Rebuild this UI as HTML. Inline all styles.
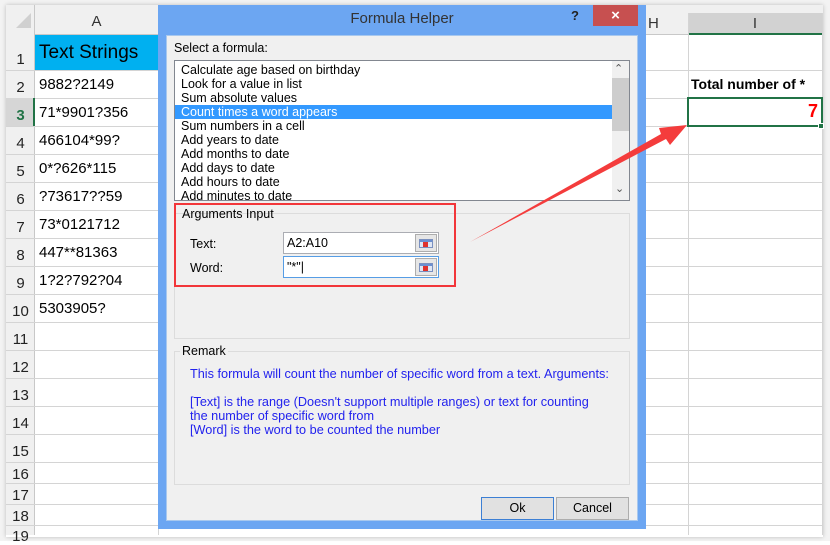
<!DOCTYPE html>
<html><head><meta charset="utf-8"><style>
*{margin:0;padding:0;box-sizing:border-box}
body{width:830px;height:541px;background:#fff;position:relative;overflow:hidden;font-family:"Liberation Sans",sans-serif}
.a{position:absolute}
.hl{position:absolute;height:1px;background:#d4d4d4}
.vl{position:absolute;width:1px;background:#d4d4d4}
.rh{position:absolute;left:6px;width:29px;font-size:15px;color:#222;text-align:center}
.cell{position:absolute;left:39px;font-size:15px;color:#000}
.li{height:14px;line-height:14px;font-size:12.5px;padding-left:6px;color:#000;white-space:nowrap}
</style></head><body>
<div class="a" style="left:0;top:0;width:830px;height:541px;background:#f3f3f3"></div>
<div class="a" style="left:6px;top:5px;width:817px;height:532px;background:#fff;box-shadow:0 0 4px #bbb"></div>
<div class="a" style="left:6px;top:5px;width:817px;height:30px;background:#f0f0f0;border-bottom:1px solid #c8c8c8"></div>
<div class="a" style="left:6px;top:5px;width:29px;height:530px;background:#f0f0f0;border-right:1px solid #c8c8c8"></div>
<div class="a" style="left:16px;top:13px;width:0;height:0;border-left:15px solid transparent;border-bottom:15px solid #d0d0d0"></div>
<div class="a" style="left:35px;top:13px;width:123px;text-align:center;font-size:15px;color:#333">A</div>
<div class="a" style="left:648px;top:15px;font-size:15px;color:#333">H</div>
<div class="a" style="left:688px;top:13px;width:134px;height:22px;background:#d2d2d2;border-bottom:2px solid #217346;text-align:center;font-size:15px;color:#333;line-height:22px">I</div>
<div class="vl" style="left:688px;top:13px;height:522px"></div>
<div class="vl" style="left:822px;top:13px;height:522px"></div>
<div class="vl" style="left:158px;top:13px;height:522px"></div>
<div class="hl" style="left:6px;top:70px;width:817px"></div>
<div class="hl" style="left:6px;top:98px;width:817px"></div>
<div class="hl" style="left:6px;top:126px;width:817px"></div>
<div class="hl" style="left:6px;top:154px;width:817px"></div>
<div class="hl" style="left:6px;top:182px;width:817px"></div>
<div class="hl" style="left:6px;top:210px;width:817px"></div>
<div class="hl" style="left:6px;top:238px;width:817px"></div>
<div class="hl" style="left:6px;top:266px;width:817px"></div>
<div class="hl" style="left:6px;top:294px;width:817px"></div>
<div class="hl" style="left:6px;top:322px;width:817px"></div>
<div class="hl" style="left:6px;top:350px;width:817px"></div>
<div class="hl" style="left:6px;top:378px;width:817px"></div>
<div class="hl" style="left:6px;top:406px;width:817px"></div>
<div class="hl" style="left:6px;top:434px;width:817px"></div>
<div class="hl" style="left:6px;top:462px;width:817px"></div>
<div class="hl" style="left:6px;top:483px;width:817px"></div>
<div class="hl" style="left:6px;top:504px;width:817px"></div>
<div class="hl" style="left:6px;top:525px;width:817px"></div>
<div class="a" style="left:6px;top:98px;width:29px;height:28px;background:#d6d6d6;border-right:2px solid #217346"></div>
<div class="rh" style="top:51px">1</div><div class="rh" style="top:79px">2</div><div class="rh" style="top:107px;color:#217346;font-weight:bold">3</div>
<div class="rh" style="top:135px">4</div><div class="rh" style="top:163px">5</div><div class="rh" style="top:191px">6</div>
<div class="rh" style="top:219px">7</div><div class="rh" style="top:247px">8</div><div class="rh" style="top:275px">9</div>
<div class="rh" style="top:303px">10</div><div class="rh" style="top:331px">11</div><div class="rh" style="top:359px">12</div>
<div class="rh" style="top:387px">13</div><div class="rh" style="top:415px">14</div><div class="rh" style="top:443px">15</div>
<div class="rh" style="top:466px">16</div><div class="rh" style="top:487px">17</div><div class="rh" style="top:508px">18</div><div class="rh" style="top:528px">19</div>
<div class="a" style="left:35px;top:35px;width:123px;height:35px;background:#00b0f0"></div>
<div class="cell" style="top:42px;font-size:19px">Text Strings</div>
<div class="cell" style="top:76px">9882?2149</div>
<div class="cell" style="top:104px">71*9901?356</div>
<div class="cell" style="top:132px">466104*99?</div>
<div class="cell" style="top:160px">0*?626*115</div>
<div class="cell" style="top:188px">?73617??59</div>
<div class="cell" style="top:216px">73*0121712</div>
<div class="cell" style="top:244px">447**81363</div>
<div class="cell" style="top:272px">1?2?792?04</div>
<div class="cell" style="top:300px">5303905?</div>
<div class="a" style="left:691px;top:76px;font-size:14px;font-weight:bold;white-space:nowrap">Total number of *</div>
<div class="a" style="left:687px;top:97px;width:136px;height:30px;border:2px solid #217346"></div>
<div class="a" style="left:818px;top:123px;width:6px;height:6px;background:#217346;border:1px solid #fff"></div>
<div class="a" style="left:790px;top:101px;width:28px;text-align:right;font-size:18px;font-weight:bold;color:#f00">7</div>
<div class="a" style="left:158px;top:5px;width:488px;height:524px;background:#6ca6f2"></div>
<div class="a" style="left:158px;top:10px;width:488px;text-align:center;font-size:15px;color:#333">Formula Helper</div>
<div class="a" style="left:571px;top:8px;font-size:13px;font-weight:bold;color:#222">?</div>
<div class="a" style="left:593px;top:5px;width:45px;height:21px;background:#c75050;color:#fff;text-align:center;font-size:15px;font-weight:bold;line-height:21px">×</div>
<div class="a" style="left:166px;top:35px;width:472px;height:486px;background:#f0f0f0;border:1px solid #a8c8ee"></div>
<div class="a" style="left:174px;top:41px;font-size:12.5px">Select a formula:</div>
<div class="a" style="left:174px;top:60px;width:456px;height:141px;background:#fff;border:1px solid #828790;overflow:hidden;padding-top:2px">
<div class="li">Calculate age based on birthday</div>
<div class="li">Look for a value in list</div>
<div class="li">Sum absolute values</div>
<div class="li" style="background:#3399ff;color:#fff;width:437px">Count times a word appears</div>
<div class="li">Sum numbers in a cell</div>
<div class="li">Add years to date</div>
<div class="li">Add months to date</div>
<div class="li">Add days to date</div>
<div class="li">Add hours to date</div>
<div class="li">Add minutes to date</div>
</div>
<div class="a" style="left:612px;top:61px;width:17px;height:139px;background:#f0f0f0"></div>
<div class="a" style="left:612px;top:78px;width:17px;height:53px;background:#cdcdcd"></div>
<div class="a" style="left:614px;top:62px;font-size:11px;color:#555">&#8963;</div>
<div class="a" style="left:615px;top:182px;font-size:11px;color:#555">&#8964;</div>
<div class="a" style="left:174px;top:213px;width:456px;height:126px;border:1px solid #dcdcdc"></div>
<div class="a" style="left:174px;top:203px;width:282px;height:84px;border:2px solid #f2363a"></div>
<div class="a" style="left:182px;top:207px;font-size:12.5px">Arguments Input</div>
<div class="a" style="left:190px;top:237px;font-size:12.5px">Text:</div>
<div class="a" style="left:190px;top:261px;font-size:12.5px">Word:</div>
<div class="a" style="left:283px;top:232px;width:156px;height:22px;background:#fff;border:1px solid #abadb3;font-size:12.5px;padding:3px 3px">A2:A10</div>
<div class="a" style="left:283px;top:256px;width:156px;height:22px;background:#fff;border:1px solid #569de5;font-size:12.5px;padding:3px 3px">"*"|</div>
<div class="a" style="left:415px;top:234px;width:22px;height:18px;background:#e6e6e6;border:1px solid #adadad"><div style="margin:4px 3px;width:14px;height:9px;background:linear-gradient(#6a8fd0 0 30%,#dfe6f3 30%);border:1px solid #7a90c0"><div style="margin:2px 3px;width:5px;height:5px;background:#e0312c"></div></div></div>
<div class="a" style="left:415px;top:258px;width:22px;height:18px;background:#e6e6e6;border:1px solid #adadad"><div style="margin:4px 3px;width:14px;height:9px;background:linear-gradient(#6a8fd0 0 30%,#dfe6f3 30%);border:1px solid #7a90c0"><div style="margin:2px 3px;width:5px;height:5px;background:#e0312c"></div></div></div>
<div class="a" style="left:174px;top:351px;width:456px;height:134px;border:1px solid #dcdcdc"></div>
<div class="a" style="left:180px;top:344px;font-size:12.5px;background:#f0f0f0;padding:0 2px">Remark</div>
<div class="a" style="left:190px;top:367px;font-size:12.7px;color:#2222ee;line-height:14px;width:440px;white-space:nowrap">This formula will count the number of specific word from a text. Arguments:<br><br>[Text] is the range (Doesn't support multiple ranges) or text for counting<br>the number of specific word from<br>[Word] is the word to be counted the number</div>
<div class="a" style="left:481px;top:497px;width:73px;height:23px;background:#e1e1e1;border:1px solid #3c7fd4;text-align:center;font-size:12.5px;line-height:21px">Ok</div>
<div class="a" style="left:556px;top:497px;width:73px;height:23px;background:#e1e1e1;border:1px solid #adadad;text-align:center;font-size:12.5px;line-height:21px">Cancel</div>
<svg class="a" style="left:0;top:0" width="830" height="541"><polygon points="470,242 661,134 659,128 687,125 670,145 666,139" fill="#f43c3c"/></svg>
</body></html>
